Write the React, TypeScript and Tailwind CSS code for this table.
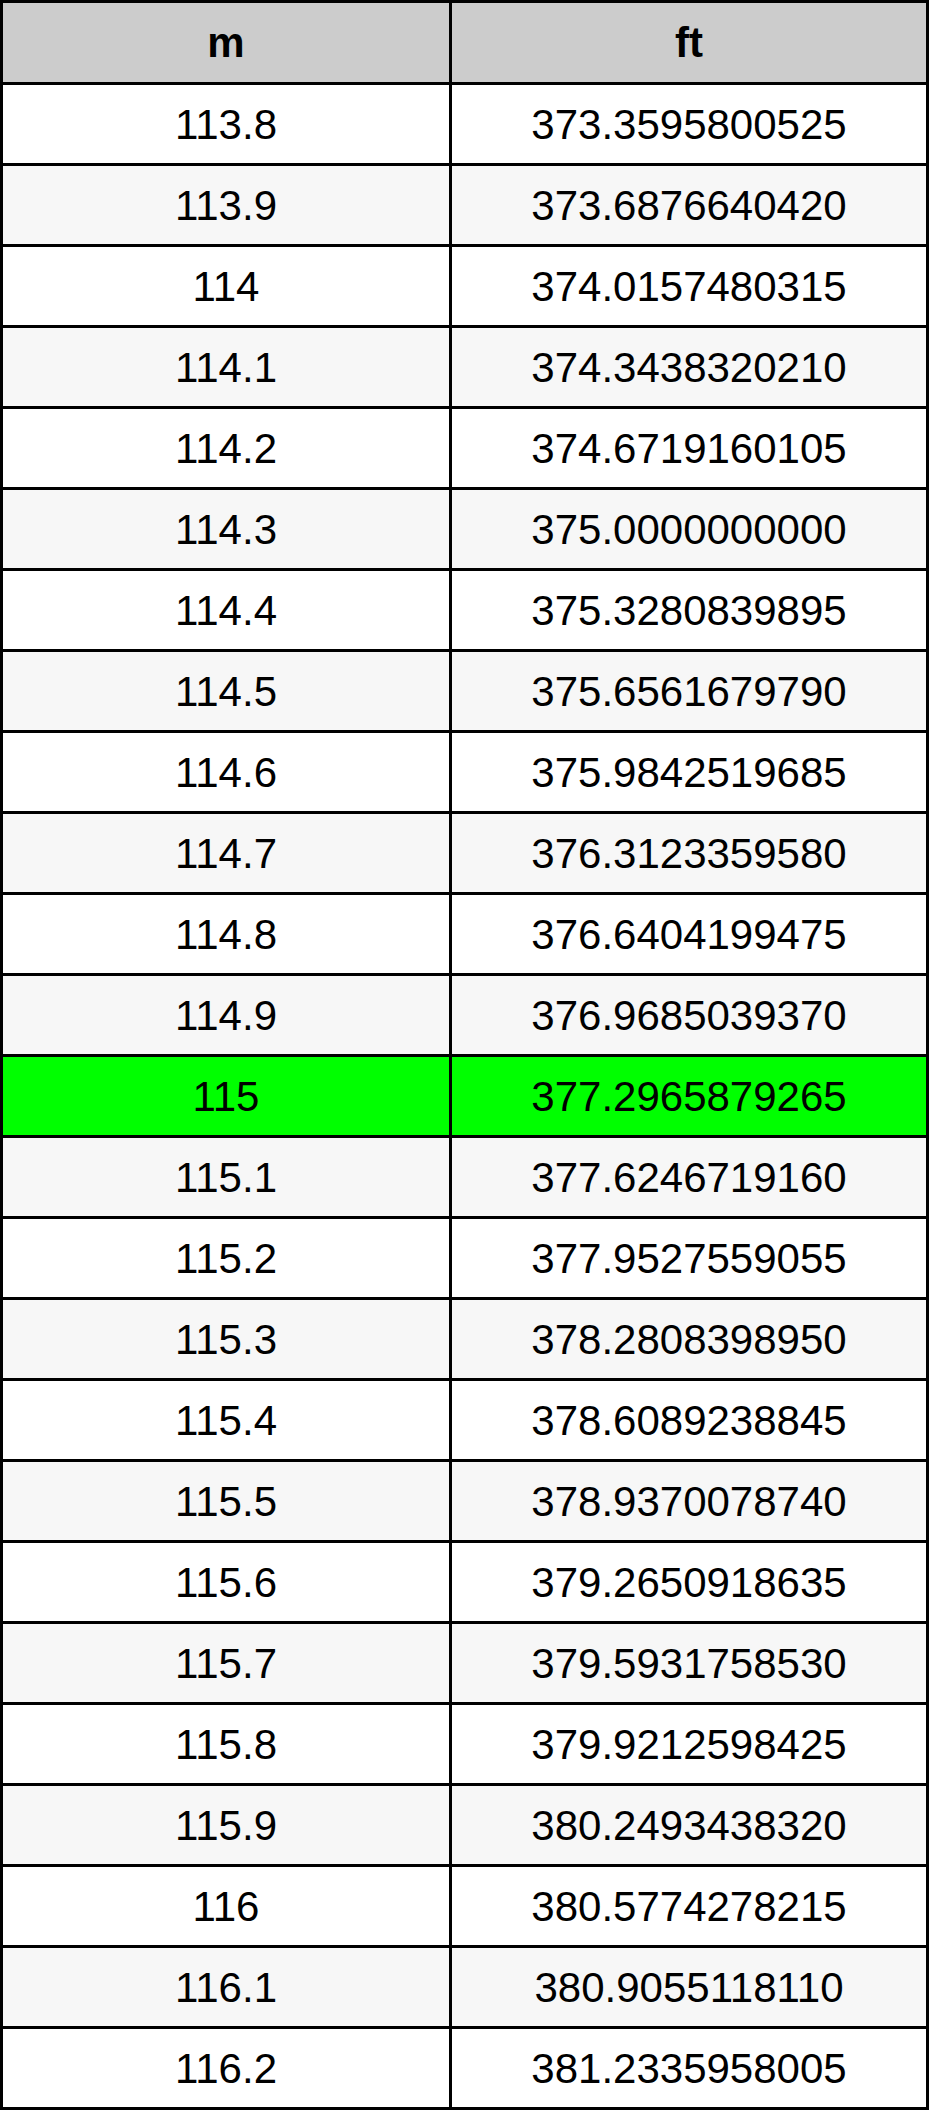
const rows: [string, string][] = [
  ['113.8', '373.3595800525'],
  ['113.9', '373.6876640420'],
  ['114', '374.0157480315'],
  ['114.1', '374.3438320210'],
  ['114.2', '374.6719160105'],
  ['114.3', '375.0000000000'],
  ['114.4', '375.3280839895'],
  ['114.5', '375.6561679790'],
  ['114.6', '375.9842519685'],
  ['114.7', '376.3123359580'],
  ['114.8', '376.6404199475'],
  ['114.9', '376.9685039370'],
  ['115', '377.2965879265'],
  ['115.1', '377.6246719160'],
  ['115.2', '377.9527559055'],
  ['115.3', '378.2808398950'],
  ['115.4', '378.6089238845'],
  ['115.5', '378.9370078740'],
  ['115.6', '379.2650918635'],
  ['115.7', '379.5931758530'],
  ['115.8', '379.9212598425'],
  ['115.9', '380.2493438320'],
  ['116', '380.5774278215'],
  ['116.1', '380.9055118110'],
  ['116.2', '381.2335958005'],
]

export default function App() {
  return (
    <div className="w-[930px] bg-white font-['Liberation_Sans',Arial,sans-serif] text-black">
      <div className="w-[929px] border-[3px] border-black bg-black grid grid-cols-[446px_474px] gap-[3px]">
        {/* header */}
        <div className="h-[79px] bg-[#cccccc] flex items-center justify-center text-[42px] font-bold">m</div>
        <div className="h-[79px] bg-[#cccccc] flex items-center justify-center text-[42px] font-bold">ft</div>

        {rows.map(([m, ft], i) => {
          const bg = m === '115' ? 'bg-[#00ff00]' : i % 2 === 0 ? 'bg-white' : 'bg-[#f7f7f7]'
          return [
            <div key={m + 'a'} className={`h-[78px] ${bg} flex items-center justify-center text-[42px]`}>{m}</div>,
            <div key={m + 'b'} className={`h-[78px] ${bg} flex items-center justify-center text-[42px]`}>{ft}</div>,
          ]
        })}
      </div>
    </div>
  )
}
